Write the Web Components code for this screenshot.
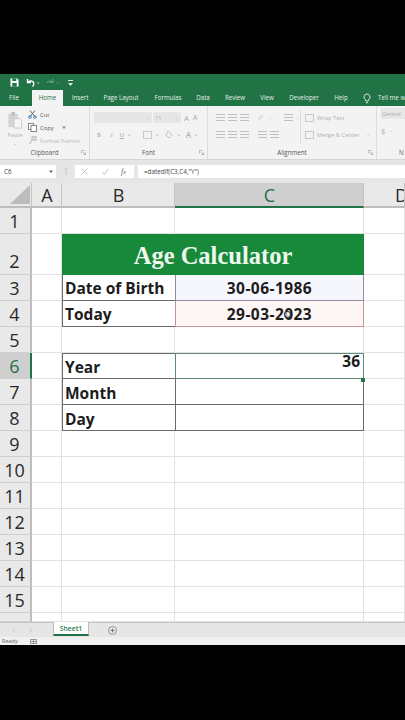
<!DOCTYPE html>
<html><head><meta charset="utf-8"><style>
html,body{margin:0;background:#000;}
body{width:405px;height:720px;overflow:hidden;display:flex;flex-direction:column;font-family:"Open Sans","Liberation Sans",sans-serif;}
.pad{height:74px;flex:none;background:#000}
.padb{flex:1;background:#000}
xl-qat,xl-tabs,xl-ribbon,xl-formula,xl-grid,xl-sheetbar,xl-status{flex:none}
</style></head><body>
<div class="pad"></div>
<xl-qat></xl-qat>
<xl-tabs></xl-tabs>
<xl-ribbon></xl-ribbon>
<xl-formula></xl-formula>
<xl-grid></xl-grid>
<xl-sheetbar></xl-sheetbar>
<xl-status></xl-status>
<div class="padb"></div>
<script>
function def(name,html){customElements.define(name,class extends HTMLElement{constructor(){super();this.attachShadow({mode:"open"}).innerHTML=html;}});}
const launcher=`<svg width="5" height="5" viewBox="0 0 5 5"><path d="M.5.500h3M.5.500v3M2 2l2.500 2.500M4.500 2.500v2h-2" stroke="#999" fill="none" stroke-width=".6"/></svg>`;
const tri=(c,st="")=>`<svg width="4" height="3" viewBox="0 0 4 3" style="flex:none;${st}"><path d="M0 .5h4L2 3z" fill="${c}"/></svg>`;
def("xl-qat",`<style>:host{display:flex;align-items:center;height:16px;background:#217346;padding:1px 0 0 10px;box-sizing:border-box}svg{display:block;flex:none}</style>
<svg width="9" height="9" viewBox="0 0 10 10"><path d="M.5.500h7.500L9.500 2v7.500H.5z" fill="#fff"/><rect x="2.500" y=".5" width="4.500" height="2.800" fill="#217346"/><rect x="2.500" y="5.500" width="5" height="4" fill="#217346"/></svg>
<svg width="15" height="10" viewBox="0 0 15 10" style="margin-left:7px"><path d="M1.500 1v3.500H5M1.800 4.300C3.500 2.300 7 2.500 7.800 5c.3 1.200-.2 2.600-1.300 3.600" fill="none" stroke="#fff" stroke-width="1.400"/><path d="M11 4.500h2.500l-1.250 1.500z" fill="#cfe3d8"/></svg>
<svg width="14" height="10" viewBox="0 0 14 10" style="margin-left:5px;opacity:.4"><path d="M7 1v3.500H3.500M6.700 4.300C5 2.300 2 2.700 1.300 5" fill="none" stroke="#cfe3d8" stroke-width="1.100"/><path d="M10.500 4.500h2.500l-1.250 1.500z" fill="#cfe3d8"/></svg>
<svg width="7" height="8" viewBox="0 0 7 8" style="margin-left:7px"><path d="M1 1.500h5" stroke="#dbe9e1"/><path d="M1 4h5L3.500 7z" fill="#dbe9e1"/></svg>`);
const tabs=[["File",0,28],["Home",32,31,1],["Insert",63,34],["Page Layout",97,48],["Formulas",155,26],["Data",181,44],["Review",225,20],["View",245,44],["Developer",289,30],["Help",319,44]];
let tabHtml=`<style>:host{display:flex;align-items:stretch;height:16px;background:#217346;color:#e4efe9;font:6.200px/16px "Open Sans","Liberation Sans",sans-serif;box-sizing:border-box;white-space:nowrap;overflow:hidden}
span{display:flex;align-items:center;justify-content:center;flex:none}.a{background:#f3f3f3;color:#2a6a49}</style>`;
let tx=0;for(const t of tabs){if(t[1]>tx)tabHtml+=`<span style="width:${t[1]-tx}px"></span>`;tabHtml+=`<span class="${t[3]?'a':''}" style="width:${t[2]}px">${t[0]}</span>`;tx=t[1]+t[2];}
tabHtml+=`<span style="width:8px"><svg width="8" height="11" viewBox="0 0 8 11"><path d="M4 1a3 3 0 0 0-1.700 5.500l.5 1.500h2.400l.5-1.500A3 3 0 0 0 4 1zM2.900 9.700h2.200" fill="none" stroke="#e4efe9" stroke-width=".9"/></svg></span><span style="margin-left:7px">Tell me w</span>`;
def("xl-tabs",tabHtml);
def("xl-ribbon",`<style>:host{display:flex;height:54px;background:#f3f3f3;border-bottom:1px solid #d6d6d6;box-sizing:border-box;font:5.800px/8px "Open Sans","Liberation Sans",sans-serif;color:#b0b0b0;overflow:hidden}
.g{flex:none;display:flex;flex-direction:column;border-right:1px solid #dcdcdc;box-sizing:border-box}
.b{flex:1;display:flex;min-height:0}
.l{height:13px;flex:none;display:flex;align-items:center;justify-content:center;color:#555;font-size:6.200px;font-weight:500;position:relative}
.l svg{position:absolute;right:3px;top:4px}
.row{display:flex;align-items:center;height:17px;white-space:nowrap}
.box{background:#e6e6e6;height:11px;box-sizing:border-box;flex:none;display:flex;align-items:center}
.ic{width:9px;height:8px;border:1px solid #c9c9c9;box-sizing:border-box;flex:none}
.ln{width:9px;height:7px;flex:none;background:repeating-linear-gradient(#c0c0c0 0 1px,transparent 1px 3px)}
.cv{font-size:5px;line-height:5px;color:#bcbcbc}
.cl{display:flex;align-items:center;gap:3px;height:13px;white-space:nowrap}
</style>
<div class="g" style="width:90px"><div class="b"><div style="width:30px;display:flex;flex-direction:column;align-items:center;padding-top:5px;gap:2px"><svg width="16" height="19" viewBox="0 0 16 19"><rect x="1" y="3" width="10" height="14" fill="#d4d4d4"/><rect x="4" y="1" width="4" height="4" fill="#c0c0c0"/><path d="M7 8h6l2 2v8H7z" fill="#f6f6f6" stroke="#c8c8c8"/></svg><span>Paste</span><span class="cv">⌄</span></div>
<div style="padding:2px 0 0 0;margin-left:-2px"><div class="cl" style="color:#555"><svg width="9" height="9" viewBox="0 0 9 9"><path d="M2 .5L6.500 6M7 .5L2.500 6" stroke="#666" fill="none"/><circle cx="2" cy="7" r="1.300" fill="none" stroke="#3f7fb5"/><circle cx="7" cy="7" r="1.300" fill="none" stroke="#3f7fb5"/></svg>Cut</div>
<div class="cl" style="color:#555"><svg width="9" height="9" viewBox="0 0 9 9"><rect x=".5" y=".5" width="5" height="6" fill="#fff" stroke="#888"/><rect x="3" y="2.500" width="5.500" height="6" fill="#fff" stroke="#888"/></svg>Copy${tri("#888","margin-left:5px")}</div>
<div class="cl" style="color:#b8b8b8"><svg width="9" height="9" viewBox="0 0 9 9"><path d="M4 1h4v3H4zM4 4L1.500 8" stroke="#c0c0c0" fill="none" stroke-width="1.300"/></svg>Format Painter</div></div></div>
<div class="l">Clipboard${launcher}</div></div>
<div class="g" style="width:118px"><div class="b" style="flex-direction:column;padding:3px 0 0 4px">
<div class="row"><div class="box" style="width:58px;justify-content:flex-end;padding-right:2px"><span class="cv">⌄</span></div><div class="box" style="width:28px;margin-left:1px;justify-content:space-between;padding:0 2px"><span>11</span><span class="cv">⌄</span></div><span style="margin-left:3px;font-size:8px;color:#aaa">A</span><span style="font-size:7px;margin-left:4px;color:#aaa">A</span></div>
<div class="row" style="font-weight:600"><span style="margin-left:3px">B</span><i style="margin-left:10px">I</i><u style="margin-left:7px">U</u><span class="cv" style="margin-left:3px">⌄</span><span class="ic" style="margin-left:12px"></span><span class="cv" style="margin-left:3px">⌄</span><svg width="10" height="9" viewBox="0 0 10 9" style="margin-left:6px"><path d="M3 1l4 4-3 3-3-3z" fill="none" stroke="#c4c4c4"/></svg><span class="cv" style="margin-left:2px">⌄</span><span style="font-size:8px;margin-left:5px">A</span><span class="cv" style="margin-left:3px">⌄</span></div></div>
<div class="l">Font${launcher}</div></div>
<div class="g" style="width:169px"><div class="b" style="padding:3px 0 0 8px"><div style="width:84px;flex:none;border-right:1px solid #dcdcdc;margin-bottom:2px"><div class="row" style="gap:3px"><span class="ln"></span><span class="ln"></span><span class="ln"></span><svg width="10" height="9" viewBox="0 0 10 9" style="margin-left:5px"><path d="M1 7l6-6M3 8l6-6" stroke="#bdbdbd" fill="none"/></svg><span class="cv" style="margin-left:1px">⌄</span><span class="ln" style="margin-left:9px"></span><span class="cv">⌄</span></div><div class="row" style="gap:3px"><span class="ln"></span><span class="ln"></span><span class="ln"></span><span class="ln" style="margin-left:6px"></span><span class="ln"></span></div></div>
<div style="padding-left:4px"><div class="row" style="gap:3px"><span class="ic"></span>Wrap Text</div><div class="row" style="gap:3px"><span class="ic"></span>Merge &amp; Center<span class="cv" style="margin-left:3px">⌄</span></div></div></div>
<div class="l">Alignment${launcher}</div></div>
<div class="g" style="flex:1;border:0;padding-left:4px;overflow:hidden"><div class="b" style="flex-direction:column;padding-top:2px"><div class="box" style="width:24px;padding-left:1px;white-space:nowrap;font-size:5.400px;letter-spacing:-.2px;overflow:hidden">General</div><div class="row" style="font-size:8px;margin-top:3px;gap:3px">$<span class="cv">⌄</span></div></div><div class="l" style="justify-content:flex-start;padding-left:18px">N</div></div>`);
def("xl-formula",`<style>:host{display:flex;align-items:center;height:23px;background:#e6e6e6;box-sizing:border-box;font:6.300px/13px "Open Sans","Liberation Sans",sans-serif;color:#444}
.n{width:56px;height:13px;background:#fff;display:flex;align-items:center;justify-content:space-between;padding:0 3px 0 4px;box-sizing:border-box;flex:none}
.f{flex:1;height:13px;background:#fff;display:flex;align-items:center;padding-left:6px;white-space:nowrap;margin-left:4px}
.c{width:59px;height:13px;background:#fff;display:flex;align-items:center;box-sizing:border-box;flex:none;color:#bbb}
.c svg{flex:none}
.d{width:19px;flex:none;display:flex;justify-content:center}</style>
<div class="n"><span>C6</span>${tri("#666")}</div><div class="d"><svg width="2" height="8" viewBox="0 0 2 8"><path d="M1 0v8" stroke="#bbb" stroke-width="1.500" stroke-dasharray="1 1"/></svg></div>
<div class="c"><svg width="7" height="7" viewBox="0 0 7 7" style="margin-left:6px"><path d="M.5.500l6 6M6.500.500l-6 6" stroke="#c4c4c4"/></svg><svg width="7" height="7" viewBox="0 0 7 7" style="margin-left:14px"><path d="M.5 4l2 2.500L6.500 1" stroke="#c4c4c4" fill="none"/></svg><i style="color:#666;font-family:'Liberation Serif',serif;font-size:8px;margin-left:12px">f<span style="font-size:6px">x</span></i></div>
<div class="f">=datedif(C3,C4,"Y")</div>`);
customElements.define("xl-cell",class extends HTMLElement{constructor(){super();this.attachShadow({mode:"open"}).innerHTML=`<style>:host{display:flex;box-sizing:border-box;min-width:0;position:relative;background:var(--bg,#fff);border-right:1px solid #e2e2e2;border-bottom:1px solid #e2e2e2;font:700 15.500px "Open Sans","Liberation Sans",sans-serif;color:#1c1c1c;padding:0 2px;white-space:nowrap}</style><slot></slot>`;}});
customElements.define("xl-grid",class extends HTMLElement{constructor(){super();const s=this.attachShadow({mode:"open"});
let h=`<style>:host{display:grid;grid-template-columns:32px 30px 113px 189px 41px;grid-template-rows:25px 26px 41px repeat(13,26px) 9px;height:439px;overflow:hidden;background:#fff;position:relative;font-family:"Open Sans","Liberation Sans",sans-serif}
.ch,.rh{background:#e9e9e9;color:#2a2a2a;display:flex;align-items:center;justify-content:center;box-sizing:border-box;overflow:hidden}
.ch{border-right:1px solid #c4c4c4;border-bottom:2px solid #bdbdbd;font-size:18px;padding:1px 0 0 1px}
.rh{border-right:2px solid #bdbdbd;border-bottom:1px solid #cfcfcf;font-size:18px;padding:1px 1px 0 0}
.c0{background:#e9e9e9;border-right:1px solid #c4c4c4;border-bottom:2px solid #bdbdbd;position:relative;box-sizing:border-box}
.c0 svg{position:absolute;right:1px;bottom:2px}
.sel{background:#cfcfcf;color:#1f6f49;border-bottom:2px solid #217346}
.rsel{background:#cfcfcf;color:#1f6f49;border-right:2px solid #217346}
.h{position:absolute;width:4px;height:4px;left:361px;top:195px;background:#217346}
</style><div class="c0"><svg width="20" height="19" viewBox="0 0 20 19"><path d="M20 0v19H0z" fill="#bcbcbc"/></svg></div><div class="ch">A</div><div class="ch">B</div><div class="ch sel">C</div><div class="ch" style="justify-content:flex-start;padding-left:31px">D</div>`;
const lab={3:"Date of Birth",4:"Today",6:"Year",7:"Month",8:"Day"};
const bd="#6a6a6a";
for(let n=1;n<=16;n++){
 const r=n==16?"":String(n);
 h+=`<div class="rh ${n==6?'rsel':''}" ${n==2?'style="align-items:flex-end;line-height:26px"':''}>${r}</div>`;
 h+=`<xl-cell></xl-cell>`;
 if(n==2){h+=`<xl-cell style="grid-column:3/5;--bg:#18893b;border:0;padding-top:3px;font:700 24.500px 'Liberation Serif',serif;color:#eef8ec;align-items:center;justify-content:center">Age Calculator</xl-cell>`;}
 else if(lab[n]){
  const top=n==6?`border-top:1px solid ${bd}`:'border-top:0';
  h+=`<xl-cell style="border:1px solid ${bd};${top};border-right:0;align-items:center;padding-top:${n>=6?2:1}px">${lab[n]}</xl-cell>`;
  const ls='letter-spacing:.45px;padding-top:1px';
  if(n==3)h+=`<xl-cell style="--bg:#f6f7fc;border:1px solid #8f8a9c;border-top:0;justify-content:center;align-items:center;${ls}">30-06-1986</xl-cell>`;
  else if(n==4)h+=`<xl-cell style="--bg:#fdf6f4;border:1px solid #c6929a;border-top:0;justify-content:center;align-items:center;${ls}">29-03-2023<svg width="9" height="11" viewBox="0 0 9 11" style="position:absolute;left:107px;top:8px"><circle cx="4.500" cy="5.500" r="3" fill="#fff" fill-opacity=".65" stroke="#333" stroke-width="1.100"/></svg></xl-cell>`;
  else if(n==6)h+=`<xl-cell style="border:1px solid #5c8a73;justify-content:flex-end;align-items:flex-start;line-height:14px;padding-right:3px">36</xl-cell>`;
  else h+=`<xl-cell style="border:1px solid ${bd};border-top:0"></xl-cell>`;
 } else {h+=`<xl-cell></xl-cell><xl-cell></xl-cell>`;}
 h+=`<xl-cell></xl-cell>`;
}
h+=`<div class="h"></div>`;
s.innerHTML=h;}});
def("xl-sheetbar",`<style>:host{display:flex;align-items:stretch;height:15px;background:#e6e6e6;border-top:1px solid #c4c4c4;box-sizing:border-box;font:600 6.800px "Open Sans","Liberation Sans",sans-serif;color:#2f7a55}
.t{width:36px;background:#fff;border-bottom:2px solid #217346;border-left:1px solid #bbb;border-right:1px solid #bbb;box-sizing:border-box;display:flex;align-items:center;justify-content:center;margin:-1px 0 1px 20px}
svg{align-self:center;flex:none}</style>
<svg width="4" height="5" viewBox="0 0 4 5" style="margin-left:12px"><path d="M3 .5L1 2.500 3 4.500" fill="none" stroke="#c0c0c0"/></svg><svg width="4" height="5" viewBox="0 0 4 5" style="margin-left:13px"><path d="M1 .5L3 2.500 1 4.500" fill="none" stroke="#c0c0c0"/></svg>
<div class="t">Sheet1</div><svg width="9" height="9" viewBox="0 0 9 9" style="margin-left:19px"><circle cx="4.500" cy="4.500" r="4" fill="none" stroke="#777" stroke-width=".7"/><path d="M2.500 4.500h4M4.500 2.500v4" stroke="#666" stroke-width=".8"/></svg>`);
def("xl-status",`<style>:host{display:flex;align-items:center;height:8px;background:#f0f0f0;font:5.500px/8px "Open Sans","Liberation Sans",sans-serif;color:#666;padding-left:2px;gap:12px}svg{flex:none}</style><span>Ready</span><svg width="7" height="5" viewBox="0 0 7 5"><path d="M.5.500h6v4h-6zM3.500.5v4M.5 2.500h6" fill="none" stroke="#777" stroke-width=".7"/></svg>`);
</script>
</body></html>
